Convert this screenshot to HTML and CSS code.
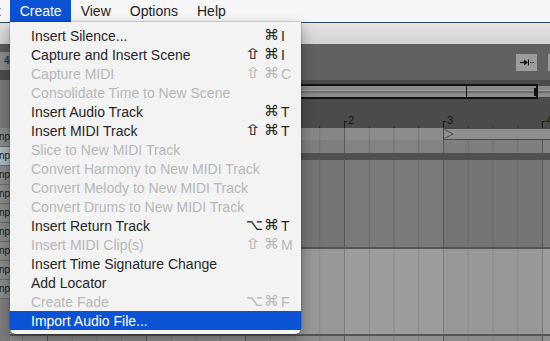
FILE: index.html
```html
<!DOCTYPE html>
<html lang="en">
<head>
    <meta charset="UTF-8">
    <meta name="viewport" content="width=device-width, initial-scale=1.0">
    <title>Create Menu</title>
    <link rel="stylesheet" href="styles.css">
</head>
<body>
    <div class="menubar">
        <span class="mb-item edge">Edit</span>
        <span class="mb-item active">Create</span>
        <span class="mb-item">View</span>
        <span class="mb-item">Options</span>
        <span class="mb-item">Help</span>
    </div>

    <div class="window">
        <div class="titlebar"></div>
        <div class="workspace">
            <aside class="side">
                <div class="side-gap"></div>
                <div class="side-tab">4</div>
                <div class="side-dark"></div>
                <div class="side-head"></div>
                <div class="side-row">np</div>
                <div class="side-row sel">np</div>
                <div class="side-row">np</div>
                <div class="side-row">np</div>
                <div class="side-row">np</div>
                <div class="side-row">np</div>
                <div class="side-row">np</div>
                <div class="side-row">np</div>
                <div class="side-row">np</div>
            </aside>

            <main class="arrange">
                <div class="controls">
                    <button class="tool">
                        <svg width="21" height="17" viewBox="0 0 21 17">
                            <path d="M4 8.5h4" stroke="#111" stroke-width="1.2"/>
                            <path d="M8 5.5l4 3-4 3z" fill="#111"/>
                            <path d="M12.5 5.5v6" stroke="#111" stroke-width="1"/>
                            <path d="M14 8.5h5" stroke="#111" stroke-width="1" stroke-dasharray="1.5 1"/>
                        </svg>
                    </button>
                    <button class="tool"></button>
                </div>

                <div class="overview">
                    <div class="ov-box"></div>
                    <div class="ov-tail"></div>
                </div>

                <div class="ruler">
                    <div class="bar"><span class="mark"></span></div>
                    <div class="bar"><span class="mark"></span><span class="num">2</span></div>
                    <div class="bar"><span class="mark"></span><span class="num">3</span></div>
                    <div class="bar"><span class="mark"></span><span class="num">4</span></div>
                </div>

                <div class="lane scenes">
                    <div class="clip">
                        <svg width="10" height="10" viewBox="0 0 10 10">
                            <path d="M0.5 0.5L9 5 0.5 9.5" fill="none" stroke="#4a4a4a" stroke-width="1"/>
                        </svg>
                    </div>
                </div>
                <div class="lane locators"></div>
                <div class="sep wide"></div>
                <div class="lane track-a"></div>
                <div class="sep"></div>
                <div class="lane track-b"></div>
                <div class="sep"></div>
                <div class="lane track-c"></div>
            </main>
        </div>
    </div>

    <ul class="menu">
        <li class="item"><span>Insert Silence...</span><span class="keys"><span class="mods">⌘</span><span class="key">I</span></span></li>
        <li class="item"><span>Capture and Insert Scene</span><span class="keys"><span class="mods"><span class="shift">⇧</span>⌘</span><span class="key">I</span></span></li>
        <li class="item off"><span>Capture MIDI</span><span class="keys"><span class="mods"><span class="shift">⇧</span>⌘</span><span class="key">C</span></span></li>
        <li class="item off"><span>Consolidate Time to New Scene</span></li>
        <li class="item"><span>Insert Audio Track</span><span class="keys"><span class="mods">⌘</span><span class="key">T</span></span></li>
        <li class="item"><span>Insert MIDI Track</span><span class="keys"><span class="mods"><span class="shift">⇧</span>⌘</span><span class="key">T</span></span></li>
        <li class="item off"><span>Slice to New MIDI Track</span></li>
        <li class="item off"><span>Convert Harmony to New MIDI Track</span></li>
        <li class="item off"><span>Convert Melody to New MIDI Track</span></li>
        <li class="item off"><span>Convert Drums to New MIDI Track</span></li>
        <li class="item"><span>Insert Return Track</span><span class="keys"><span class="mods">⌥⌘</span><span class="key">T</span></span></li>
        <li class="item off"><span>Insert MIDI Clip(s)</span><span class="keys"><span class="mods"><span class="shift">⇧</span>⌘</span><span class="key">M</span></span></li>
        <li class="item"><span>Insert Time Signature Change</span></li>
        <li class="item"><span>Add Locator</span></li>
        <li class="item off"><span>Create Fade</span><span class="keys"><span class="mods">⌥⌘</span><span class="key">F</span></span></li>
        <li class="item hover"><span>Import Audio File...</span></li>
    </ul>
</body>
</html>
```

FILE: styles.css
```css
html, body {
    margin: 0;
    height: 100%;
    overflow: hidden;
}
body {
    font-family: "Liberation Sans", "DejaVu Sans", sans-serif;
    font-size: 14px;
    color: #262626;
    display: flex;
    flex-direction: column;
}

/* top menu bar */
.menubar {
    height: 22px;
    display: flex;
    background: #f6f6f6;
    white-space: nowrap;
    flex-shrink: 0;
}
.mb-item {
    padding: 0 9.5px;
    line-height: 22px;
    color: #222;
}
.mb-item.edge { margin-left: -33px; }
.mb-item.active {
    background: #0b52d4;
    color: #fff;
}

/* app window behind the menu */
.window {
    flex: 1;
    display: flex;
    flex-direction: column;
    min-height: 0;
}
.titlebar {
    height: 21px;
    border-top: 1px solid #2d4a6b;
    background: linear-gradient(#e2e2e2, #d2d2d2);
    flex-shrink: 0;
}
.workspace {
    flex: 1;
    display: flex;
    min-height: 0;
}

.side {
    width: 10px;
    overflow: hidden;
    display: flex;
    flex-direction: column;
    background: #7d7d7d;
    font-size: 10px;
    color: #1a1a1a;
    flex-shrink: 0;
}
.side-gap { height: 8px; background: #5b5b5b; }
.side-tab {
    height: 18px;
    line-height: 18px;
    padding-left: 4px;
    background: #8a8a8a;
    color: #1f3a58;
    font-weight: bold;
}
.side-dark { height: 10px; background: #4d4d4d; }
.side-head { height: 48px; background: #787878; }
.side-row {
    height: 18px;
    line-height: 18px;
    border-bottom: 1px solid #6a6a6a;
    background: #8a8a8a;
    text-indent: -1px;
}
.side-row.sel { background: #aab8c1; }

.arrange {
    flex: 1;
    display: flex;
    flex-direction: column;
    background: #4b4b4b;
    overflow: hidden;
}
.controls {
    height: 36px;
    box-sizing: border-box;
    display: flex;
    gap: 11px;
    padding: 10px 0 0 506px;
    background: #616161;
}
.tool {
    width: 21px;
    height: 17px;
    flex-shrink: 0;
    padding: 0;
    border: 0;
    background: #9c9c9c;
}
.tool svg { display: block; }

.overview {
    display: flex;
    padding-top: 4px;
    height: 15px;
}
.ov-box {
    width: 524px;
    border: 2px solid #111;
    background:
        linear-gradient(#111, #111) no-repeat right 0 top 2px / 2px 8px,
        linear-gradient(to right, transparent 454px, #111 454px 455px, transparent 455px),
        linear-gradient(#8a8a8a 0 4px, #9b9b9b 4px 5px, #707070 5px 7px, #8c8c8c 7px);
}
.ov-tail {
    flex: 1;
    margin: 2px 0;
    background: linear-gradient(#8a8a8a 0 4px, #9b9b9b 4px 5px, #707070 5px 7px, #8c8c8c 7px);
}

.ruler {
    height: 29px;
    display: flex;
    padding-left: 235px;
    background: linear-gradient(to right, #2a2a2a 1px, transparent 1px) repeat-x 309.25px bottom / 24.75px 2px;
}
.bar {
    width: 99px;
    flex-shrink: 0;
    display: flex;
    align-items: flex-end;
}
.mark {
    width: 2px;
    height: 6px;
    border-left: 1px solid #1a1a1a;
    border-top: 1px solid #1a1a1a;
}
.num {
    font-size: 11px;
    line-height: 10px;
    color: #161616;
    margin: 0 0 3px 1px;
}

/* clip lanes with beat grid */
.lane {
    --line: #6c6c6c;
    --bar: #585858;
    background-image:
        linear-gradient(to right, var(--bar) 1px, transparent 1px),
        linear-gradient(to right, var(--line) 1px, transparent 1px),
        linear-gradient(to right, rgba(255, 255, 255, 0.04) 99px, transparent 99px);
    background-size: 99px 100%, 24.75px 100%, 198px 100%;
    background-position: 334px 0, 309.25px 0, 334px 0;
}
.scenes {
    height: 12px;
    background-color: #868686;
    --line: #767676;
    --bar: #5c5c5c;
}
.clip {
    margin-left: 433px;
    height: 10px;
    border: 1px solid #4a4a4a;
    border-right: 0;
    background: #8e8e8e;
}
.clip svg { display: block; }
.locators {
    height: 13px;
    background-color: #7e7e7e;
    --line: #6e6e6e;
}
.sep { height: 2px; background: #555; }
.sep.wide { height: 7px; background: #505050; }
.track-a {
    height: 87px;
    background-color: #757575;
    --line: #686868;
}
.track-b {
    height: 85px;
    background-color: #989898;
    --line: #8a8a8a;
    --bar: #7c7c7c;
}
.track-c {
    flex: 1;
    background-color: #8b8b8b;
    --line: #7e7e7e;
}

/* dropdown menu */
.menu {
    position: absolute;
    top: 22px;
    left: 10px;
    width: 291px;
    box-sizing: border-box;
    margin: 0;
    padding: 4px 0;
    list-style: none;
    background: #f3f3f3;
    border-radius: 0 0 6px 6px;
    box-shadow: 0 5px 14px rgba(0, 0, 0, 0.35), 0 0 0 0.5px rgba(0, 0, 0, 0.25);
}
.item {
    height: 19px;
    display: flex;
    align-items: center;
    justify-content: space-between;
    padding: 0 8px 0 21px;
    white-space: nowrap;
}
.item.off { color: #b8b8b8; }
.item.hover {
    background: #0b52d4;
    color: #fff;
}
.keys {
    display: flex;
    align-items: center;
}
.mods {
    display: flex;
    align-items: center;
    font-family: "DejaVu Sans", sans-serif;
    font-size: 15px;
    line-height: 19px;
    letter-spacing: 1px;
}
.shift {
    display: inline-block;
    font-size: 15px;
    margin: 0 3px 0 1px;
    transform: scaleX(1.45);
}
.key {
    width: 12px;
    margin-left: 1px;
}
```
